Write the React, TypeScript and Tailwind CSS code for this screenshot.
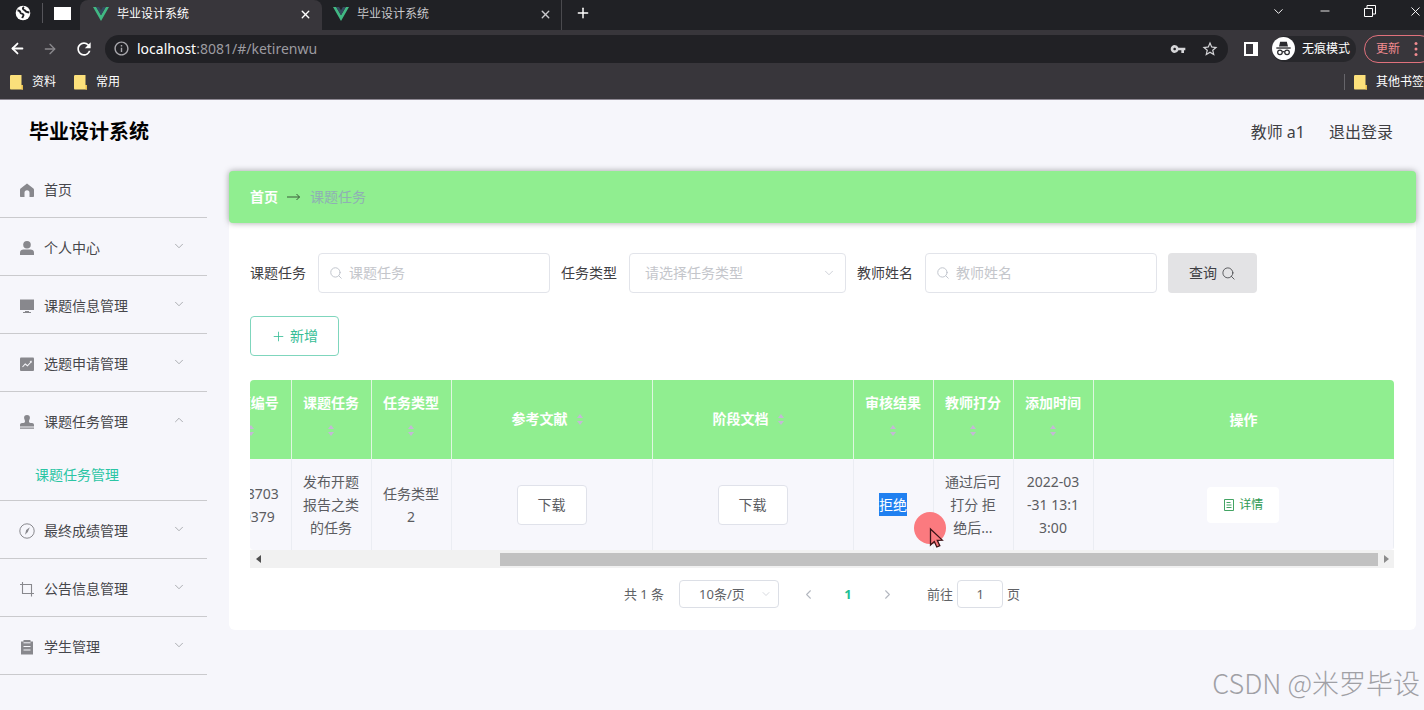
import type { ReactNode } from 'react';
import { ChevronDown, ChevronUp, Search, Plus, X, Minus, ArrowLeft, ArrowRight } from 'lucide-react';
import { MdInfoOutline, MdRefresh, MdStarBorder, MdVpnKey } from 'react-icons/md';

interface MenuItem {
  label: string;
  icon: ReactNode;
  children?: string[];
  plain?: boolean;
}

const HomeIcon = () => (
  <svg viewBox="0 0 16 16" className="w-4 h-4" fill="currentColor">
    <path d="M8 1.500 1.600 6.600c-.4.3-.6.8-.6 1.300V14c0 .6.4 1 1 1h3.500v-4.200a2.500 2.500 0 0 1 5 0V15H14c.6 0 1-.4 1-1V7.900c0-.5-.2-1-.6-1.300z" />
  </svg>
);

const UserIcon = () => (
  <svg viewBox="0 0 16 16" className="w-4 h-4" fill="currentColor">
    <circle cx="8" cy="4.800" r="3.800" />
    <path d="M1 15v-2.500C1 10.800 2.500 9.600 4.500 9.600h7c2 0 3.500 1.200 3.500 2.900V15z" />
  </svg>
);

const MonitorIcon = () => (
  <svg viewBox="0 0 16 16" className="w-4 h-4" fill="currentColor">
    <path d="M1 1.500h14v10.500H1zM6 13h4v1h2v1H4v-1h2z" />
  </svg>
);

const ChartIcon = () => (
  <svg viewBox="0 0 16 16" className="w-4 h-4">
    <rect x="1" y="1.500" width="14" height="13.500" rx="1" fill="currentColor" />
    <path d="m3.500 11 2.700-3 2.300 1.800L12 6" fill="none" stroke="#f6f6fa" strokeWidth="1.100" />
    <path d="m10.500 5 2.300-.3-.3 2.300z" fill="#f6f6fa" />
  </svg>
);

const StampIcon = () => (
  <svg viewBox="0 0 16 16" className="w-4 h-4" fill="currentColor">
    <path d="M8 1C6 1 4.900 2.300 5.100 4c.2 1.300.9 2 .9 3.600 0 .9-.6 1.400-1.500 1.400H3c-1.200 0-2 .8-2 2v1.500h14V11c0-1.200-.8-2-2-2h-1.500C10.600 9 10 8.500 10 7.600 10 6 10.700 5.300 10.900 4 11.100 2.300 10 1 8 1zM1 13.500h14v1.300H1z" />
  </svg>
);

const CompassIcon = () => (
  <svg viewBox="0 0 16 16" className="w-4 h-4">
    <circle cx="8" cy="8" r="7.200" fill="none" stroke="currentColor" strokeWidth="1" />
    <path d="M10.800 4.300 8.800 9 6 11.700 7.200 7z" fill="currentColor" />
  </svg>
);

const CropIcon = () => (
  <svg viewBox="0 0 16 16" className="w-4 h-4" fill="none" stroke="currentColor" strokeWidth="1.100">
    <path d="M3.500 1v11.500H15M1 3.500h11.500V15.500" />
  </svg>
);

const ClipboardIcon = () => (
  <svg viewBox="0 0 16 16" className="w-4 h-4">
    <path d="M2 2.500h2.500V1h7v1.500H14V15.500H2z" fill="currentColor" />
    <path d="M4.500 3.800h7M4.500 7.500h7M4.500 11h7" stroke="#f6f6fa" strokeWidth="1" />
  </svg>
);

const DetailIcon = () => (
  <svg viewBox="0 0 12 12" className="w-3 h-3" fill="none" stroke="currentColor">
    <path d="M1.500.5h9v11h-9zM3.500 3.500h4M3.500 6h5M3.500 8.500h5" strokeWidth=".9" />
  </svg>
);

const VueLogo = () => (
  <svg viewBox="0 0 16 14" className="w-4 h-4 shrink-0">
    <path d="M0 0h3.200L8 8.300 12.800 0H16L8 13.900z" fill="#41b883" />
    <path d="M3.200 0h2.900L8 3.300 9.900 0h2.900L8 8.300z" fill="#35495e" />
  </svg>
);

const FolderIcon = () => (
  <svg viewBox="0 0 13 15" className="w-[13px] h-[15px] shrink-0">
    <path d="M0 1.500C0 .7.500 0 1 0h10.500v10H13v4.500H1c-.5 0-1-.5-1-1z" fill="#fbe07b" />
    <path d="M11.500 10H13v4.500h-1.500z" fill="#e9bd4b" />
  </svg>
);

const menu: MenuItem[] = [
  { label: '首页', icon: <HomeIcon />, plain: true },
  { label: '个人中心', icon: <UserIcon /> },
  { label: '课题信息管理', icon: <MonitorIcon /> },
  { label: '选题申请管理', icon: <ChartIcon /> },
  { label: '课题任务管理', icon: <StampIcon />, children: ['课题任务管理'] },
  { label: '最终成绩管理', icon: <CompassIcon /> },
  { label: '公告信息管理', icon: <CropIcon /> },
  { label: '学生管理', icon: <ClipboardIcon /> },
];

const columns = ['课题编号', '课题任务', '任务类型', '参考文献', '阶段文档', '审核结果', '教师打分', '添加时间'];

function BrowserBar() {
  return (
    <div className="bg-[#38363b] text-white text-xs border-b border-[#8d8892] overflow-hidden">
      <div className="flex h-[30px] bg-[#202125]">
        <div className="flex items-center w-20 pb-1">
          <svg viewBox="0 0 16 16" className="w-4 h-4 ml-[15px]">
            <circle cx="8" cy="8" r="7.300" fill="#fff" />
            <path d="M2.500 5.500c2-.2 2.700.8 3 2.200.3 1.200 2.500.6 3 2 .3 1.200-1 1.600-1.200 3.500M9 2c-1.500 1-1.500 2.200 0 2.800 1.600.5 1 2 3 2.200l2.300.5" fill="none" stroke="#202125" strokeWidth="1.900" />
          </svg>
          <span className="w-px h-5 bg-[#55555a] ml-[11px]" />
          <span className="w-[17px] h-[13px] bg-white ml-[11px]" />
        </div>
        <div className="flex items-center w-[242px] bg-[#38363b] rounded-t-lg pl-[13px] pr-[10px] pb-[2px]">
          <VueLogo />
          <span className="ml-2 flex-1">毕业设计系统</span>
          <button aria-label="关闭标签页"><X size={13} strokeWidth={2.5} /></button>
        </div>
        <div className="flex items-center w-60 pl-[11px] pr-[9px] pb-[2px] border-r border-[#4a4a4e] text-[#c9c9cd]">
          <VueLogo />
          <span className="ml-2 flex-1">毕业设计系统</span>
          <button aria-label="关闭标签页"><X size={13} strokeWidth={2.5} /></button>
        </div>
        <button aria-label="新标签页" className="ml-[13px] pb-1"><Plus size={16} strokeWidth={2.2} /></button>
        <div className="ml-auto flex items-center pb-2 pr-[1px] gap-8">
          <button aria-label="搜索标签页"><ChevronDown size={15} strokeWidth={1.5} /></button>
          <button aria-label="最小化"><Minus size={14} strokeWidth={1.5} /></button>
          <button aria-label="还原">
            <svg viewBox="0 0 12 12" className="w-3 h-3" fill="none" stroke="currentColor">
              <path d="M.5 3.500h8v8h-8zM3 3.500v-3h8.500V9h-3" />
            </svg>
          </button>
          <button aria-label="关闭"><X size={15} strokeWidth={1.5} /></button>
        </div>
      </div>
      <div className="flex items-center h-[37px]">
        <div className="flex items-center gap-4 pl-[9px] w-[105px]">
          <button aria-label="后退"><ArrowLeft size={17} strokeWidth={2.5} /></button>
          <button aria-label="前进" className="text-[#8a898d]"><ArrowRight size={16} strokeWidth={2} /></button>
          <button aria-label="刷新"><MdRefresh size={20} /></button>
        </div>
        <div className="flex flex-1 items-center h-7 rounded-full bg-[#212125] pl-2 pr-[9px]">
          <MdInfoOutline size={17} className="text-[#a9a8ad]" />
          <span className="ml-[7px] flex-1 font-['Noto_Sans',sans-serif] text-sm text-[#9c9ba0]">
            <span className="text-white">localhost</span>:8081/#/ketirenwu
          </span>
          <MdVpnKey size={16} className="text-[#d5d5d8]" />
          <MdStarBorder size={18} className="ml-[15px] text-[#d5d5d8]" />
        </div>
        <svg viewBox="0 0 14 14" className="w-[14px] h-[14px] ml-4">
          <path d="M1 1h12v12H1z" fill="none" stroke="#fff" strokeWidth="2" />
          <path d="M9 1h4v12H9z" fill="#fff" />
        </svg>
        <div className="flex items-center h-[26px] rounded-full bg-[#27272b] ml-[14px] pr-1.5 gap-[7px]">
          <svg viewBox="0 0 24 24" className="w-[23px] h-[23px]">
            <circle cx="12" cy="12" r="12" fill="#fff" />
            <path d="M8.500 5h7l1.200 5H7.300z" fill="#2b2b2f" />
            <path d="M4.500 11.500h15" stroke="#2b2b2f" strokeWidth="1.400" />
            <g fill="none" stroke="#2b2b2f" strokeWidth="1.300">
              <circle cx="8.300" cy="16" r="2.400" />
              <circle cx="15.700" cy="16" r="2.400" />
              <path d="M10.700 15.600q1.300-.8 2.600 0" />
            </g>
          </svg>
          <span>无痕模式</span>
        </div>
        <button className="flex items-center h-7 w-[70px] shrink-0 rounded-full border border-[#e0717c] text-[#f28b90] pl-[11px] ml-2 -mr-[10px]">
          更新
          <svg viewBox="0 0 4 16" className="w-1 h-4 ml-[14px]" fill="currentColor">
            <circle cx="2" cy="2.500" r="1.500" />
            <circle cx="2" cy="8" r="1.500" />
            <circle cx="2" cy="13.500" r="1.500" />
          </svg>
        </button>
      </div>
      <div className="flex items-center h-8 pl-[10px] pb-[2px] gap-[9px]">
        <FolderIcon />
        <a href="#ziliao">资料</a>
        <span className="w-0" />
        <FolderIcon />
        <a href="#changyong">常用</a>
        <span className="ml-auto w-px h-4 bg-[#66656a]" />
        <FolderIcon />
        <a href="#other" className="whitespace-nowrap">其他书签</a>
      </div>
    </div>
  );
}

function Sidebar() {
  return (
    <nav className="w-[207px] shrink-0 text-sm text-[#46464b]">
      <ul>
        {menu.map((item) => (
          <li key={item.label} className="border-b border-[#cacacd]">
            <a href="#menu" className="flex items-center h-[57px] pl-[19px] pr-[21px] pt-[2px]">
              <span className="text-[#88888d]">{item.icon}</span>
              <span className="ml-[9px] flex-1">{item.label}</span>
              {!item.plain && (
                <span className="text-[#94969b] pb-1">
                  {item.children ? <ChevronUp size={14} strokeWidth={1.3} /> : <ChevronDown size={14} strokeWidth={1.3} />}
                </span>
              )}
            </a>
            {item.children?.map((child) => (
              <a key={child} href="#/ketirenwu" className="flex items-center h-[51px] pl-[35px] text-[#2bc5a4]">
                {child}
              </a>
            ))}
          </li>
        ))}
      </ul>
    </nav>
  );
}

function SearchInput({ id, label }: { id: string; label: string }) {
  return (
    <div className="flex items-center">
      <label htmlFor={id} className="mr-3 text-[#3f4044]">{label}</label>
      <div className="flex items-center w-[232px] h-10 px-[10px] gap-1.5 rounded border border-[#e2e4ea]">
        <Search size={14} strokeWidth={1.7} className="shrink-0 text-[#c0c4cc]" />
        <input id={id} placeholder={label} className="w-full outline-none placeholder:text-[#c4c6cb]" />
      </div>
    </div>
  );
}

const SortCaret = () => (
  <span className="inline-flex w-6 h-[34px] items-center justify-center align-middle">
    <svg viewBox="0 0 8 12" className="w-2 h-3" fill="#c3b9d4">
      <path d="M4 0l3 4H1zM4 11 1 7h6z" />
    </svg>
  </span>
);

const DownloadButton = () => (
  <button className="w-[70px] h-10 rounded border border-[#e0e2ea] bg-white text-[#5b5c61]">下载</button>
);

function TaskTable() {
  return (
    <div>
      {/* scrolled to the right end, so the first column is cut on its left side */}
      <div className="flex justify-end overflow-hidden rounded-sm">
        <table className="w-[calc(100%+39px)] min-w-[1183px] shrink-0 table-fixed border-collapse text-center leading-[23px]">
          <colgroup>
            <col className="w-20" />
            <col className="w-20" />
            <col className="w-20" />
            <col className="w-[201px]" />
            <col className="w-[201px]" />
            <col className="w-20" />
            <col className="w-20" />
            <col className="w-20" />
            <col />
          </colgroup>
          <thead>
            <tr className="h-[79px] bg-[#90ee90] text-white">
              {columns.map((name) => (
                <th key={name} className="px-[10px] font-bold border-r border-[#dff7e0]">
                  {name}
                  <SortCaret />
                </th>
              ))}
              <th className="px-[10px] font-bold">操作</th>
            </tr>
          </thead>
          <tbody>
            <tr className="h-[91px] bg-[#f7f7fc] text-[#5b5c61] *:px-[10px] *:border-r *:border-[#ebedf3]">
              <td className="break-all">1648703580379</td>
              <td>发布开题报告之类的任务</td>
              <td>任务类型2</td>
              <td><DownloadButton /></td>
              <td><DownloadButton /></td>
              <td className="relative">
                <span className="inline-block bg-[#2080f0] text-white">拒绝</span>
                <svg viewBox="0 0 32 36" className="absolute left-[60px] top-[53px] z-10 w-8 h-9">
                  <circle cx="16" cy="16" r="16" fill="#fb7a7f" />
                  <path d="M16.500 17v16l3.800-3.500 2.500 5.500 3-1.300-2.500-5.300 5-.3z" fill="#fb7a7f" stroke="#3b1418" strokeWidth="1.300" />
                </svg>
              </td>
              <td>通过后可打分 拒绝后...</td>
              <td className="whitespace-nowrap">
                2022-03
                <br />
                -31 13:1
                <br />
                3:00
              </td>
              <td>
                <button className="inline-flex items-center justify-center gap-1 w-[72px] h-9 rounded bg-white text-xs text-[#2f9a52]">
                  <DetailIcon />
                  详情
                </button>
              </td>
            </tr>
          </tbody>
        </table>
      </div>
      <div className="flex items-center h-[18px] bg-[#f1f1f1]">
        <button aria-label="向左滚动" className="flex justify-center w-4 text-[#505050]">
          <svg viewBox="0 0 5 8" className="w-[5px] h-2" fill="currentColor"><path d="M5 0v8L0 4z" /></svg>
        </button>
        <div className="flex flex-1 justify-end">
          <div className="w-[79%] h-[13px] bg-[#c1c1c1]" />
        </div>
        <button aria-label="向右滚动" className="flex justify-center w-4 text-[#8c8c8c]">
          <svg viewBox="0 0 5 8" className="w-[5px] h-2" fill="currentColor"><path d="M0 0v8l5-4z" /></svg>
        </button>
      </div>
    </div>
  );
}

function Pagination() {
  return (
    <div className="flex items-center justify-center mt-3 text-[13px] text-[#606266]">
      <span>共 1 条</span>
      <div className="relative ml-[15px]">
        <select aria-label="每页条数" className="w-[100px] h-7 pl-[19px] appearance-none rounded border border-[#dcdfe6]">
          <option>10条/页</option>
        </select>
        <ChevronDown size={12} strokeWidth={1.3} className="absolute right-[7px] top-2 text-[#c0c4cc]" />
      </div>
      <button aria-label="上一页" className="ml-[22px] text-[#b4b8c0]">
        <ChevronDown size={15} strokeWidth={1.7} className="rotate-90" />
      </button>
      <button className="w-16 font-bold text-[#1fbf94]">1</button>
      <button aria-label="下一页" className="text-[#b4b8c0]">
        <ChevronDown size={15} strokeWidth={1.7} className="-rotate-90" />
      </button>
      <label htmlFor="jump" className="ml-8">前往</label>
      <input id="jump" defaultValue="1" className="w-[46px] h-7 mx-1 rounded border border-[#dcdfe6] text-center" />
      <span>页</span>
    </div>
  );
}

export default function App() {
  return (
    <div className="relative min-h-screen overflow-hidden bg-[#f6f6fb] font-['Noto_Sans','Noto_Sans_CJK_SC',sans-serif] text-sm">
      <BrowserBar />
      <header className="flex items-center justify-between h-[60px] pt-[3px] pl-[29px] pr-[31px]">
        <h1 className="text-xl font-bold text-black">毕业设计系统</h1>
        <div className="flex gap-6 text-base text-[#3f3f44]">
          <span>教师 a1</span>
          <a href="#logout">退出登录</a>
        </div>
      </header>
      <div className="flex">
        <Sidebar />
        <main className="flex-1 min-w-0 pt-[11px] pl-[22px] pr-2">
          <div className="rounded-md bg-white">
            <div className="flex items-center h-[52px] px-[21px] rounded-sm bg-[#90ee90] shadow-[0_0_6px_rgba(0,0,0,0.35)]">
              <a href="#home" className="font-bold text-white">首页</a>
              <svg viewBox="0 0 14 8" className="w-[14px] h-2 mx-[9px]" fill="none" stroke="#3b5a3b">
                <path d="M0 4h12.500M9.500 1l3 3-3 3" />
              </svg>
              <span className="text-[#8fb0b4]">课题任务</span>
            </div>
            <div className="pl-[21px] pr-[22px] pt-[30px] pb-[22px]">
              <form className="flex flex-wrap items-center gap-[11px]" onSubmit={(e) => e.preventDefault()}>
                <SearchInput id="task" label="课题任务" />
                <div className="flex items-center">
                  <label htmlFor="type" className="mr-3 text-[#3f4044]">任务类型</label>
                  <div className="relative">
                    <select id="type" className="w-[217px] h-10 pl-[15px] appearance-none rounded border border-[#e2e4ea] text-[#c4c6cb]">
                      <option>请选择任务类型</option>
                    </select>
                    <ChevronDown size={14} strokeWidth={1.3} className="absolute right-[10px] top-[13px] text-[#c0c4cc]" />
                  </div>
                </div>
                <SearchInput id="teacher" label="教师姓名" />
                <button className="flex items-center justify-center gap-1 w-[89px] h-10 rounded-sm bg-[#e3e3e5] text-[#3f4044]">
                  查询
                  <Search size={15} strokeWidth={1.3} />
                </button>
              </form>
              <button className="flex items-center justify-center gap-1 w-[89px] h-10 mt-[23px] mb-6 rounded border border-[#7fd6bd] text-[#35bd95]">
                <Plus size={15} strokeWidth={1.3} />
                新增
              </button>
              <TaskTable />
              <Pagination />
            </div>
          </div>
        </main>
      </div>
      <div className="absolute right-1 bottom-[7px] font-['Noto_Sans_CJK_SC',sans-serif] text-[27px] leading-10 font-light text-[#a0a0a5]">
        CSDN @米罗毕设
      </div>
    </div>
  );
}
